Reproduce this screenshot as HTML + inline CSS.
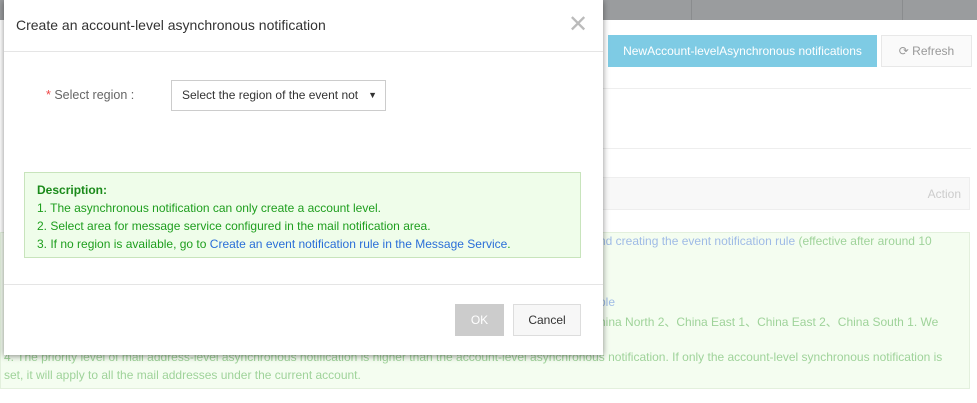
<!DOCTYPE html>
<html><head><style>
body{margin:0;width:977px;height:403px;overflow:hidden;font-family:"Liberation Sans",sans-serif;font-size:12px;background:#fff;position:relative}
.a{position:absolute}
</style></head><body>
<div class="a" style="left:0;top:0;width:977px;height:20px;background:#9a9c9e"></div>
<div class="a" style="left:691px;top:0;width:1px;height:20px;background:#8a8c8e"></div>
<div class="a" style="left:902px;top:0;width:1px;height:20px;background:#8a8c8e"></div>
<div class="a" style="left:608px;top:35px;width:269px;height:32px;background:#7ecbe4;color:#fff;font-size:12px;line-height:32px;text-align:center">NewAccount-levelAsynchronous notifications</div>
<div class="a" style="left:881px;top:35px;width:89px;height:30px;border:1px solid #e8e8e8;background:#fafafa;color:#999;line-height:30px;text-align:center">⟳ Refresh</div>
<div class="a" style="left:600px;top:88px;width:371px;height:1px;background:#eee"></div>
<div class="a" style="left:600px;top:148px;width:371px;height:1px;background:#eee"></div>
<div class="a" style="left:600px;top:177px;width:370px;height:33px;background:#f8f8f8;border:1px solid #eee;color:#ccc;line-height:33px;text-align:right;box-sizing:border-box;padding-right:8px">Action</div>
<div class="a" style="left:0;top:232px;width:970px;height:157px;background:#f4fdf0;border:1px solid #e3f0dd;box-sizing:border-box"></div>
<div class="a" style="left:599px;top:232px;color:#9fbbe6;white-space:nowrap;line-height:18px">nd creating the event notification rule <span style="color:#9fd39a">(effective after around 10</span></div>
<div class="a" style="left:599px;top:294px;color:#9fbbe6;line-height:16px">ple</div>
<div class="a" style="left:599px;top:313px;color:#9fd39a;white-space:nowrap;line-height:18px">hina North 2、China East 1、China East 2、China South 1. We</div>
<div class="a" style="left:4px;top:348px;color:#9fd39a;white-space:nowrap;line-height:18px;width:965px">4. The priority level of mail address-level asynchronous notification is higher than the account-level asynchronous notification. If only the account-level synchronous notification is</div>
<div class="a" style="left:4px;top:366px;color:#9fd39a;white-space:nowrap;line-height:18px">set, it will apply to all the mail addresses under the current account.</div>

<div class="a" style="left:4px;top:0;width:599px;height:355px;background:#fff;box-shadow:0 1px 6px rgba(0,0,0,.45)">
<div class="a" style="left:12px;top:17px;font-size:14px;color:#333">Create an account-level asynchronous notification</div>
<div class="a" style="left:564px;top:10px;font-size:24px;color:#bbb;font-weight:300">✕</div>
<div class="a" style="left:0;top:51px;width:599px;height:1px;background:#e5e5e5"></div>
<div class="a" style="left:42px;top:88px;color:#666;font-size:12.5px"><span style="color:#e44">*</span> Select region :</div>
<div class="a" style="left:167px;top:80px;width:215px;height:31px;border:1px solid #ccc;box-sizing:border-box;color:#333;line-height:29px;padding-left:10px">Select the region of the event not<span style="position:absolute;right:8px;font-size:9px">▼</span></div>
<div class="a" style="left:20px;top:172px;width:557px;height:86px;background:#effdea;border:1px solid #c8e4bc;box-sizing:border-box;padding:8px 12px;color:#1e9e1e;font-size:12px;line-height:18px">
<b style="color:#1a8a1a">Description:</b><br>1. The asynchronous notification can only create a account level.<br>2. Select area for message service configured in the mail notification area.<br>3. If no region is available, go to <span style="color:#2a6ed8">Create an event notification rule in the Message Service</span>.</div>
<div class="a" style="left:0;top:284px;width:599px;height:1px;background:#e5e5e5"></div>
<div class="a" style="left:451px;top:304px;width:49px;height:32px;background:#ccc;color:#fff;line-height:32px;text-align:center">OK</div>
<div class="a" style="left:509px;top:304px;width:68px;height:32px;background:#f7f7f7;border:1px solid #ddd;box-sizing:border-box;color:#333;line-height:30px;text-align:center">Cancel</div>
</div>
</body></html>
